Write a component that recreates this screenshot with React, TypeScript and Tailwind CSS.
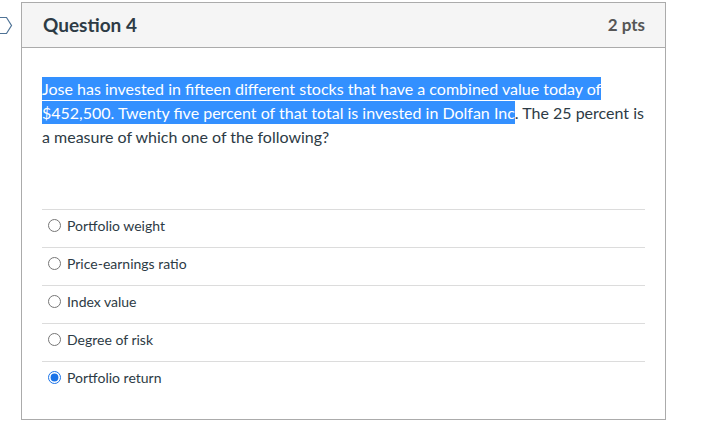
import React from "react";

const answers = [
  { label: "Portfolio weight", checked: false },
  { label: "Price-earnings ratio", checked: false },
  { label: "Index value", checked: false },
  { label: "Degree of risk", checked: false },
  { label: "Portfolio return", checked: true },
];

export default function App() {
  return (
    <div className="flex pt-[2px] font-['Lato','Noto_Sans',sans-serif] text-[#2d3b45]">
      <div className="w-[21px] shrink-0 pt-[14px]">
        <svg width="21" height="20" viewBox="0 0 21 20">
          <polygon points="-6,1.5 6.5,1.5 11.5,9.5 6.5,17.5 -6,17.5" fill="none" stroke="#4f7396" strokeWidth="1.2" />
        </svg>
      </div>
      <div className="w-[645px] shrink-0 border border-[#ababab] bg-white">
        <div className="h-[45px] flex items-center justify-between bg-[#f5f5f5] border-b border-[#ababab] pl-[21px] pr-[20px]">
          <span className="text-[19px] font-bold text-[#2d3b45]">Question 4</span>
          <span className="text-[17px] font-bold text-[#565656]">2 pts</span>
        </div>
        <div className="pl-[20px] pr-[20px] pt-[29px] pb-[20px]">
          <p className="text-[16px] leading-[24px]">
            <span className="bg-[#3390ff] text-white py-[2px]">
              Jose has invested in fifteen different stocks that have a combined value today of $452,500. Twenty five percent of that total is invested in Dolfan Inc
            </span>
            . The 25 percent is a measure of which one of the following?
          </p>
          <div className="mt-[60px]">
            {answers.map((a) => (
              <div key={a.label} className="h-[38px] border-t border-[#dcdcdc] flex items-center pb-[6px] pl-[6px] gap-[6px] text-[14px]">
                <input type="radio" name="q4" defaultChecked={a.checked} className="m-0 w-[13px] h-[13px] accent-[#1a73e8]" />
                <span>{a.label}</span>
              </div>
            ))}
          </div>
        </div>
      </div>
    </div>
  );
}
